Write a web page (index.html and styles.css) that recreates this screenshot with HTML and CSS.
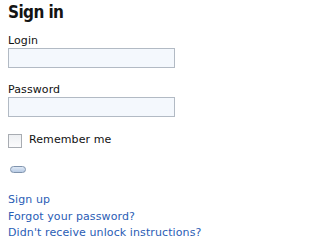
FILE: index.html
```html
<!DOCTYPE html>
<html>
<head>
<meta charset="utf-8">
<link rel="stylesheet" href="styles.css">
</head>
<body>
<h2 class="title">Sign in</h2>
<form class="form">
  <div class="field">
    <label class="label" for="login">Login</label>
    <input class="text" id="login" type="text">
  </div>
  <div class="field">
    <label class="label" for="password">Password</label>
    <input class="text" id="password" type="password">
  </div>
  <div class="check">
    <span class="box"></span>
    <span class="check-label">Remember me</span>
  </div>
  <div class="actions">
    <button class="btn" type="button"></button>
  </div>
</form>
<div class="links">
  <a href="#">Sign up</a>
  <a href="#">Forgot your password?</a>
  <a href="#">Didn't receive unlock instructions?</a>
</div>
</body>
</html>
```
FILE: styles.css
```css
html, body {
  background: #ffffff;
}
body {
  margin: 0;
  padding: 0 8px;
  font-family: "DejaVu Sans", Verdana, sans-serif;
  font-size: 11px;
  letter-spacing: 0.1px;
  color: #111111;
}
.title {
  margin: 0;
  padding-top: 2px;
  font-family: "DejaVu Sans Condensed", "DejaVu Sans", sans-serif;
  font-stretch: condensed;
  font-size: 17px;
  letter-spacing: -0.6px;
  line-height: 20px;
  font-weight: bold;
  color: #141414;
}
.form {
  margin: 0;
}
.field {
  display: flex;
  flex-direction: column;
  margin-top: 12px;
}
.field + .field {
  margin-top: 15px;
}
.label {
  line-height: 14px;
}
.text {
  box-sizing: border-box;
  width: 167px;
  height: 20px;
  margin: 0;
  border: 1px solid #b2bac4;
  background: #f4f8fd;
}
.check {
  display: flex;
  align-items: flex-start;
  gap: 7px;
  margin-top: 17px;
}
.box {
  box-sizing: border-box;
  width: 14px;
  height: 14px;
  border: 1px solid #a8acb2;
  background: linear-gradient(#eef0f3, #fbfbfc);
}
.check-label {
  line-height: 14px;
  margin-top: -1px;
}
.actions {
  margin-top: 18px;
}
.btn {
  display: block;
  box-sizing: border-box;
  width: 16px;
  height: 7px;
  margin: 0 0 0 2px;
  padding: 0;
  border: 1px solid #7f93ad;
  border-radius: 4px;
  background: linear-gradient(#dfe9f6, #b8cbe4);
}
.links {
  display: flex;
  flex-direction: column;
  align-items: flex-start;
  margin-top: 19px;
}
.links a {
  color: #2a5db5;
  text-decoration: none;
  line-height: 16.5px;
}
```
